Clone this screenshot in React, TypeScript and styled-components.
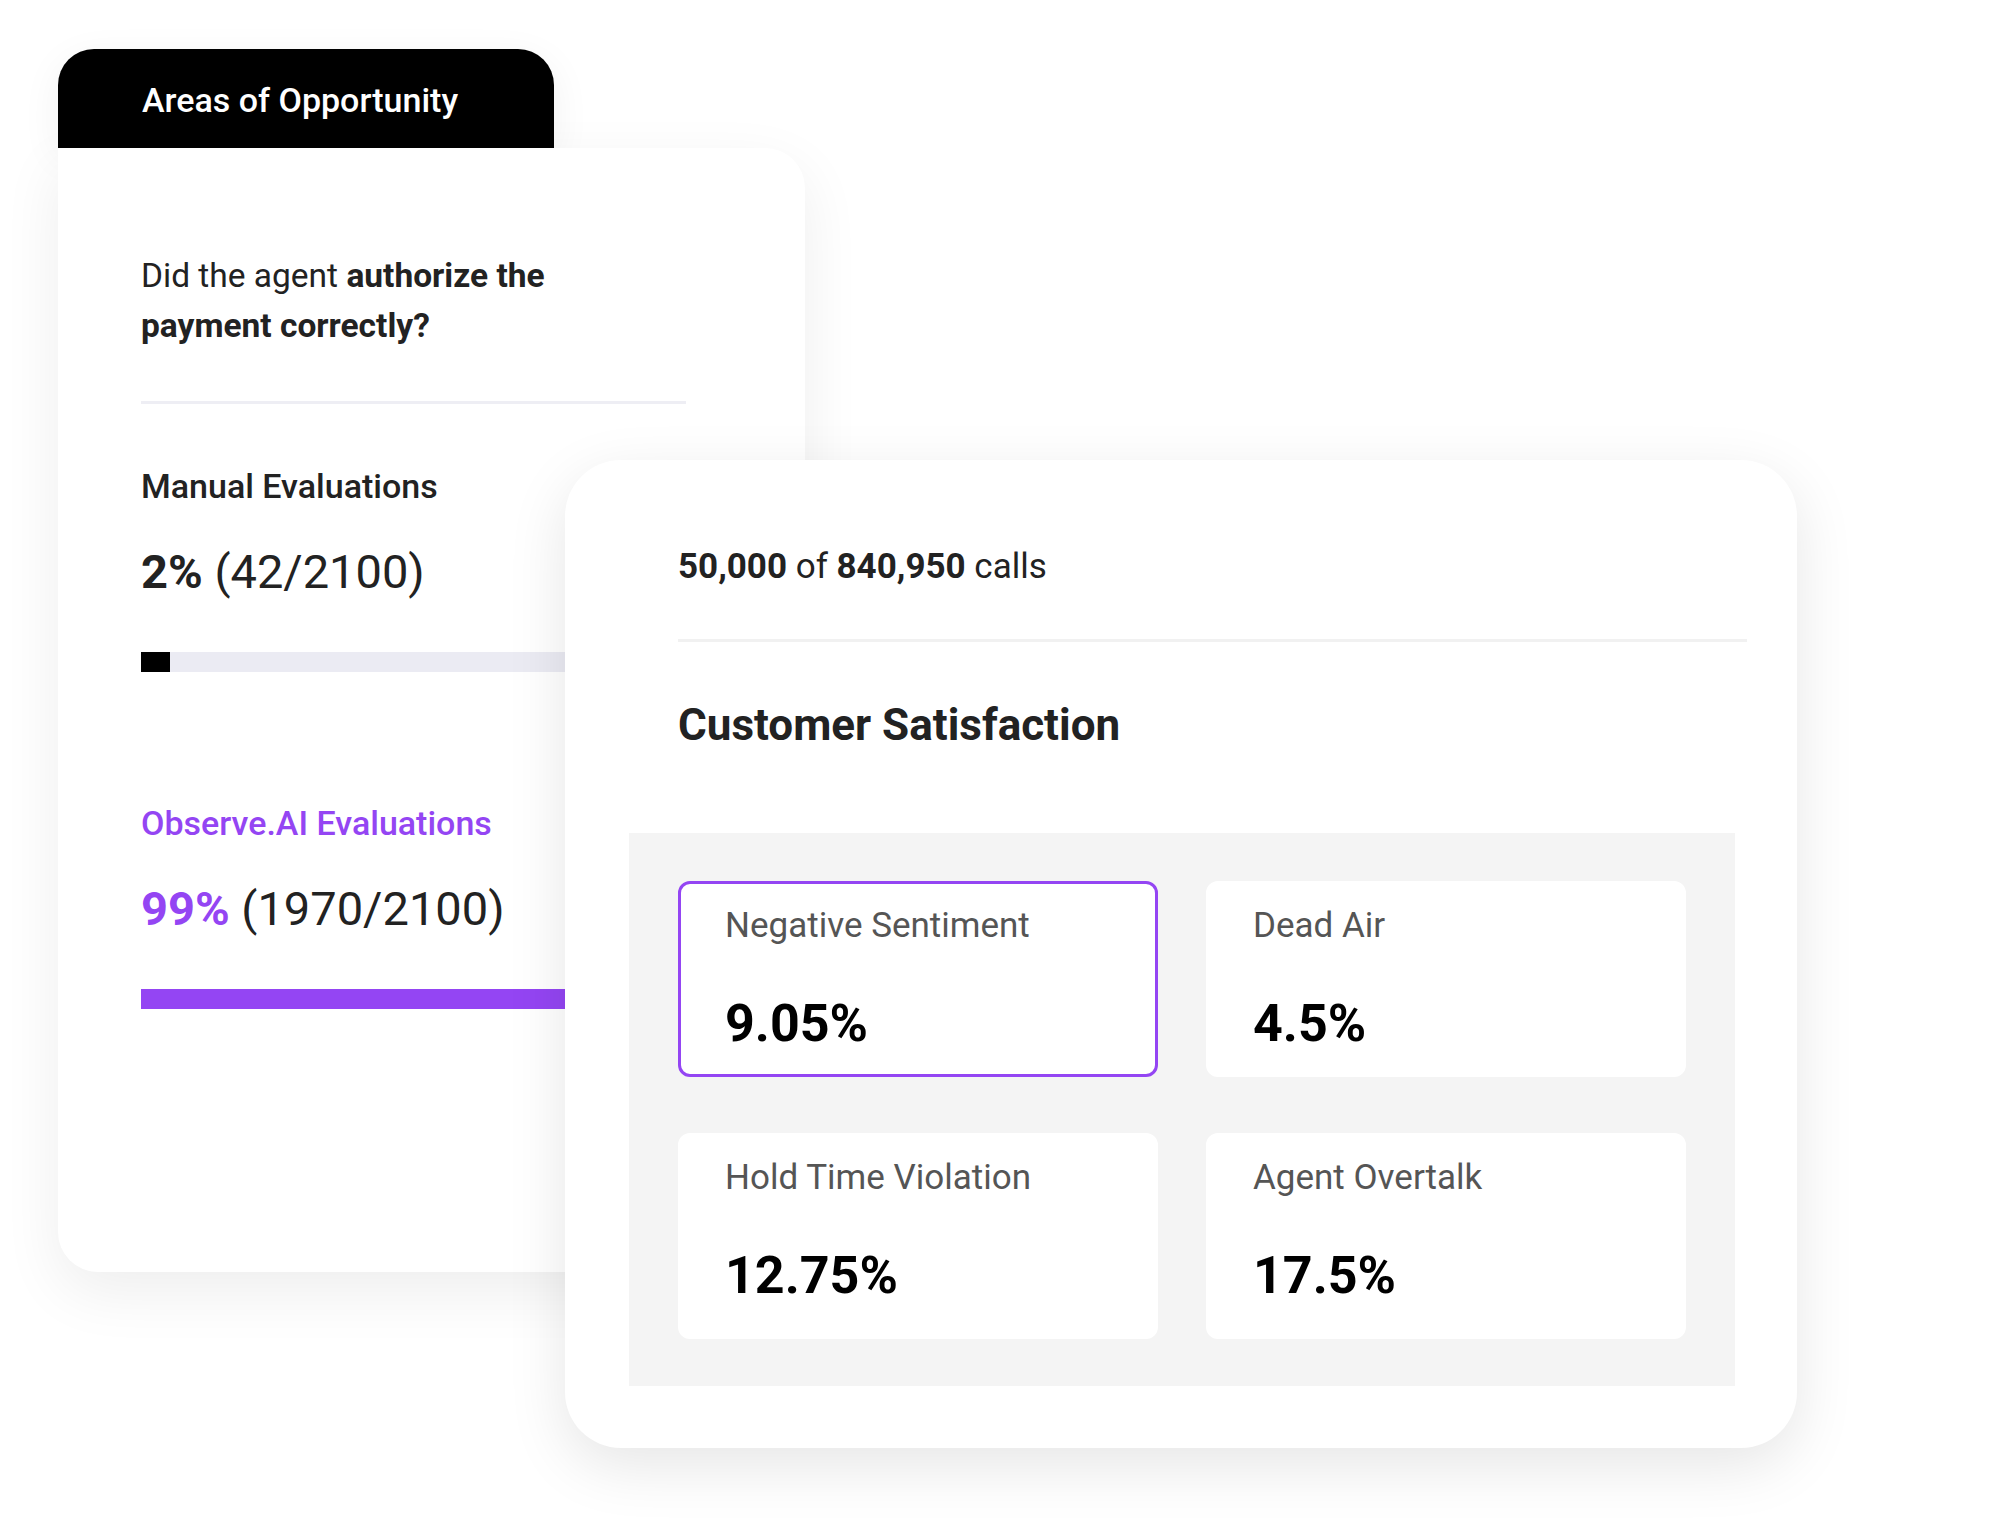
import React from 'react';
import styled, { createGlobalStyle } from 'styled-components';

const GlobalStyle = createGlobalStyle`
  * {
    box-sizing: border-box;
  }

  html,
  body {
    margin: 0;
    padding: 0;
    background: #ffffff;
  }

  body {
    font-family: Roboto, "Noto Sans", "Liberation Sans", Arial, sans-serif;
    color: #222222;
    -webkit-font-smoothing: antialiased;
  }
`;

const PURPLE = '#9445f3';

const Stage = styled.div`
  position: relative;
  width: 2000px;
  height: 1528px;
  padding: 49px 0 0 58px;
  overflow: hidden;
`;

const OpportunityColumn = styled.div`
  display: flex;
  flex-direction: column;
  width: 747px;
`;

const Tab = styled.div`
  display: flex;
  align-items: center;
  width: 496px;
  height: 99px;
  padding: 2px 0 0 84px;
  background: #000000;
  color: #ffffff;
  border-radius: 36px 36px 0 0;
  font-size: 34px;
  font-weight: 500;
  box-shadow: 0 10px 40px rgba(0, 0, 0, 0.06);
`;

const EvalCard = styled.div`
  display: flex;
  flex-direction: column;
  height: 1124px;
  padding: 103px 0 0 83px;
  background: #ffffff;
  border-radius: 0 40px 40px 40px;
  box-shadow: 0 20px 60px rgba(0, 0, 0, 0.07);
`;

const Question = styled.p`
  margin: 0;
  max-width: 460px;
  font-size: 33.5px;
  line-height: 50px;
  font-weight: 400;
  color: #222222;

  strong {
    font-weight: 700;
  }
`;

const Divider = styled.div<{ $width: number; $gap: number; $color: string }>`
  width: ${(p) => p.$width}px;
  height: 3px;
  margin-top: ${(p) => p.$gap}px;
  background: ${(p) => p.$color};
`;

const EvalLabel = styled.div<{ $accent?: boolean; $gap: number }>`
  margin-top: ${(p) => p.$gap}px;
  font-size: 34px;
  line-height: 38px;
  font-weight: 500;
  color: ${(p) => (p.$accent ? PURPLE : '#222222')};
`;

const EvalValue = styled.div<{ $accent?: boolean }>`
  margin-top: 39px;
  font-size: 47px;
  line-height: 55px;
  font-weight: 400;
  color: #222222;

  strong {
    font-weight: 700;
    color: ${(p) => (p.$accent ? PURPLE : '#222222')};
  }
`;

const Track = styled.div`
  display: flex;
  width: 545px;
  height: 20px;
  margin-top: 53px;
  background: #ebebf3;
`;

const Fill = styled.div<{ $color: string }>`
  height: 100%;
  background: ${(p) => p.$color};
`;

const InsightCard = styled.div`
  position: absolute;
  left: 565px;
  top: 460px;
  display: flex;
  flex-direction: column;
  width: 1232px;
  height: 988px;
  padding: 87px 50px 0 113px;
  background: #ffffff;
  border-radius: 56px;
  box-shadow: 0 18px 60px rgba(0, 0, 0, 0.1);
`;

const CallCount = styled.div`
  font-size: 35px;
  line-height: 40px;
  color: #222222;

  strong {
    font-weight: 700;
  }
`;

const SectionTitle = styled.h2`
  margin: 58px 0 0;
  font-size: 44px;
  line-height: 50px;
  font-weight: 700;
  color: #222222;
`;

const MetricPanel = styled.div`
  display: grid;
  grid-template-columns: 480px 480px;
  grid-template-rows: 196px 206px;
  column-gap: 48px;
  row-gap: 56px;
  width: 1106px;
  height: 553px;
  margin: 83px 0 0 -49px;
  padding: 48px 0 0 49px;
  background: #f4f4f4;
`;

const MetricTile = styled.div<{ $active?: boolean }>`
  display: flex;
  flex-direction: column;
  padding: 22px 0 0 44px;
  background: #ffffff;
  border: 3px solid ${(p) => (p.$active ? PURPLE : '#ffffff')};
  border-radius: 12px;
`;

const MetricLabel = styled.div`
  font-size: 35px;
  line-height: 40px;
  color: #555555;
`;

const MetricValue = styled.div`
  margin-top: 47px;
  font-size: 52px;
  line-height: 62px;
  font-weight: 700;
  color: #000000;
`;

const metrics = [
  { label: 'Negative Sentiment', value: '9.05%', active: true },
  { label: 'Dead Air', value: '4.5%' },
  { label: 'Hold Time Violation', value: '12.75%' },
  { label: 'Agent Overtalk', value: '17.5%' },
];

const App = () => {
  return (
    <>
      <GlobalStyle />
      <Stage>
        <OpportunityColumn>
          <Tab>Areas of Opportunity</Tab>
          <EvalCard>
            <Question>
              Did the agent <strong>authorize the payment correctly?</strong>
            </Question>
            <Divider $width={545} $gap={50} $color="#eeeef4" />

            <EvalLabel $gap={63}>Manual Evaluations</EvalLabel>
            <EvalValue>
              <strong>2%</strong> (42/2100)
            </EvalValue>
            <Track>
              <Fill $color="#000000" style={{ width: 29 }} />
            </Track>

            <EvalLabel $accent $gap={132}>
              Observe.AI Evaluations
            </EvalLabel>
            <EvalValue $accent>
              <strong>99%</strong> (1970/2100)
            </EvalValue>
            <Track>
              <Fill $color={PURPLE} style={{ width: '100%' }} />
            </Track>
          </EvalCard>
        </OpportunityColumn>

        <InsightCard>
          <CallCount>
            <strong>50,000</strong> of <strong>840,950</strong> calls
          </CallCount>
          <Divider $width={1069} $gap={52} $color="#f1f1f1" />
          <SectionTitle>Customer Satisfaction</SectionTitle>
          <MetricPanel>
            {metrics.map((m) => (
              <MetricTile key={m.label} $active={m.active}>
                <MetricLabel>{m.label}</MetricLabel>
                <MetricValue>{m.value}</MetricValue>
              </MetricTile>
            ))}
          </MetricPanel>
        </InsightCard>
      </Stage>
    </>
  );
};

export default App;
